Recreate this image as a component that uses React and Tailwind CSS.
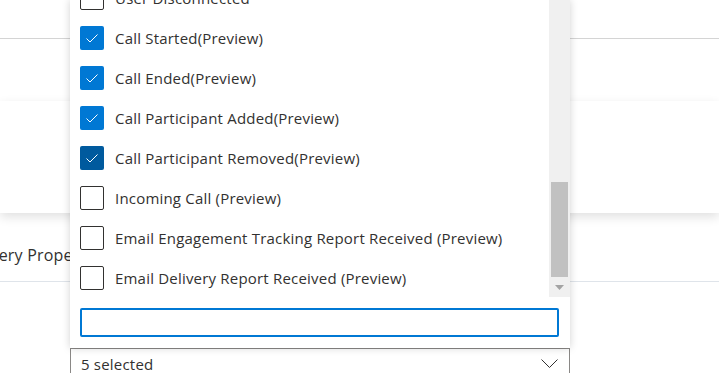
import React from 'react';

const ITEMS = [
  { label: 'User Disconnected', checked: false },
  { label: 'Call Started(Preview)', checked: true },
  { label: 'Call Ended(Preview)', checked: true },
  { label: 'Call Participant Added(Preview)', checked: true },
  { label: 'Call Participant Removed(Preview)', checked: true, hover: true },
  { label: 'Incoming Call (Preview)', checked: false },
  { label: 'Email Engagement Tracking Report Received (Preview)', checked: false },
  { label: 'Email Delivery Report Received (Preview)', checked: false },
];

function Checkbox({ checked, hover }) {
  if (!checked) {
    return <span className="h-6 w-6 shrink-0 rounded-[2px] border border-[#323130] bg-white" />;
  }
  return (
    <span
      className={
        hover
          ? 'grid h-6 w-6 shrink-0 place-items-center rounded-[2px] bg-[#005a9e]'
          : 'grid h-6 w-6 shrink-0 place-items-center rounded-[2px] bg-[#0078d4]'
      }
    >
      <svg width="16" height="16" viewBox="0 0 16 16" fill="none">
        <path d="M2.5 8.5 L6 12 L13.5 4.5" stroke="white" strokeWidth="1" />
      </svg>
    </span>
  );
}

export default function App() {
  return (
    <div
      className="relative h-[373px] w-[719px] overflow-hidden bg-white text-[#323130]"
      style={{ fontFamily: '"Open Sans", "Noto Sans", sans-serif' }}
    >
      {/* page behind the dropdown */}
      <div className="h-[39px] border-b border-[#d4d4d4]" />
      <div className="mt-[62px] h-[112px] bg-white shadow-[0_4px_10px_rgba(0,0,0,0.12)]" />
      <div className="flex h-[69px] items-end border-b border-[#dfe4ea] pb-[14px]">
        <span className="-ml-[39px] whitespace-nowrap text-[16px] tracking-[0.2px]">Delivery Properties</span>
      </div>
      <div className="ml-[70px] mt-[66px] flex h-[32px] w-[500px] items-center justify-between border border-[#8a8886] pl-[10px] pr-[11px]">
        <span className="text-[15px] tracking-[0.2px]">5 selected</span>
        <svg width="17" height="10" viewBox="0 0 17 10" fill="none">
          <path d="M0.5 0.5 L8.5 8.5 L16.5 0.5" stroke="#323130" strokeWidth="1" />
        </svg>
      </div>

      {/* open dropdown panel */}
      <div className="absolute left-[70px] top-0 w-[500px] bg-white pb-[11px] shadow-[0_0_8px_rgba(0,0,0,0.18)]">
        <div className="flex h-[297px]">
          <div className="flex-1 overflow-hidden">
            <div className="-mt-[22px]">
              {ITEMS.map((item) => (
                <div key={item.label} className="flex h-10 items-center gap-[11px] pl-[10px]">
                  <Checkbox checked={item.checked} hover={item.hover} />
                  <span className="whitespace-nowrap text-[15px] tracking-[0.2px]">{item.label}</span>
                </div>
              ))}
            </div>
          </div>
          <div className="flex w-[21px] flex-col justify-end bg-[#f0f0f0]">
            <div className="ml-[2px] mr-[2px] h-[95px] bg-[#c1c1c1]" />
            <div className="flex h-[20px] items-center justify-center">
              <svg width="9" height="5" viewBox="0 0 9 5">
                <path d="M0 0 L9 0 L4.5 5 Z" fill="#a3a3a3" />
              </svg>
            </div>
          </div>
        </div>
        <div className="mx-[10px] mr-[11px] mt-[11px] h-[29px] rounded-[2px] border-2 border-[#0078d4]" />
      </div>
    </div>
  );
}
